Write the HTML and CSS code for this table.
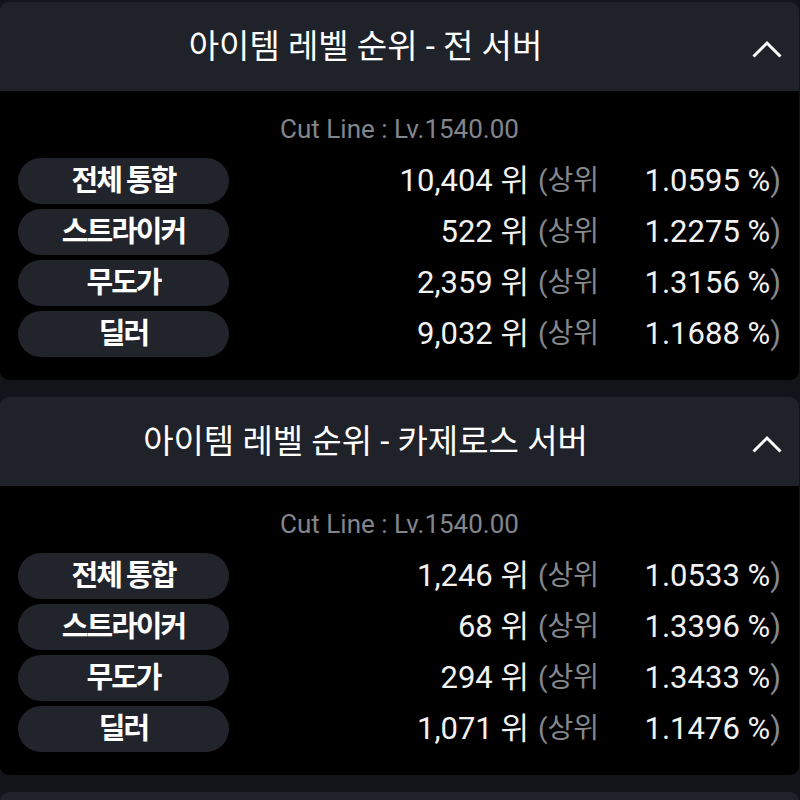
FILE: index.html
```html
<!DOCTYPE html>
<html lang="ko">
<head>
<meta charset="utf-8">
<link rel="stylesheet" href="styles.css">
</head>
<body>
<main class="page">
  <section class="card">
    <header class="card-head">
      <h2 class="title">아이템 레벨 순위 - 전 서버</h2>
      <svg class="chev" width="30" height="18" viewBox="0 0 30 18"><polyline points="1.5,16.5 15,3 28.5,16.5" fill="none" stroke="#fff" stroke-width="3"/></svg>
    </header>
    <div class="card-body">
      <div class="cut">Cut Line : Lv.1540.00</div>
      <div class="row"><span class="pill">전체 통합</span><span class="rank">10,404 위</span><span class="lbl">(상위</span><span class="pct">1.0595 %<span class="g">)</span></span></div>
      <div class="row"><span class="pill">스트라이커</span><span class="rank">522 위</span><span class="lbl">(상위</span><span class="pct">1.2275 %<span class="g">)</span></span></div>
      <div class="row"><span class="pill">무도가</span><span class="rank">2,359 위</span><span class="lbl">(상위</span><span class="pct">1.3156 %<span class="g">)</span></span></div>
      <div class="row"><span class="pill">딜러</span><span class="rank">9,032 위</span><span class="lbl">(상위</span><span class="pct">1.1688 %<span class="g">)</span></span></div>
    </div>
  </section>
  <section class="card">
    <header class="card-head">
      <h2 class="title">아이템 레벨 순위 - 카제로스 서버</h2>
      <svg class="chev" width="30" height="18" viewBox="0 0 30 18"><polyline points="1.5,16.5 15,3 28.5,16.5" fill="none" stroke="#fff" stroke-width="3"/></svg>
    </header>
    <div class="card-body">
      <div class="cut">Cut Line : Lv.1540.00</div>
      <div class="row"><span class="pill">전체 통합</span><span class="rank">1,246 위</span><span class="lbl">(상위</span><span class="pct">1.0533 %<span class="g">)</span></span></div>
      <div class="row"><span class="pill">스트라이커</span><span class="rank">68 위</span><span class="lbl">(상위</span><span class="pct">1.3396 %<span class="g">)</span></span></div>
      <div class="row"><span class="pill">무도가</span><span class="rank">294 위</span><span class="lbl">(상위</span><span class="pct">1.3433 %<span class="g">)</span></span></div>
      <div class="row"><span class="pill">딜러</span><span class="rank">1,071 위</span><span class="lbl">(상위</span><span class="pct">1.1476 %<span class="g">)</span></span></div>
    </div>
  </section>
  <section class="card">
    <header class="card-head">
      <h2 class="title">아이템 레벨 순위 - 루페온 서버</h2>
      <svg class="chev" width="30" height="18" viewBox="0 0 30 18"><polyline points="1.5,16.5 15,3 28.5,16.5" fill="none" stroke="#fff" stroke-width="3"/></svg>
    </header>
  </section>
</main>
</body>
</html>
```
FILE: styles.css
```css
html, body {
  margin: 0;
  padding: 0;
  background: #131419;
}
body {
  font-family: Roboto, "Noto Sans CJK KR", sans-serif;
  color: #f2f2f2;
  overflow: hidden;
  height: 800px;
}
.page {
  display: flex;
  flex-direction: column;
  gap: 17px;
  padding-top: 2px;
}
.card {
  display: flex;
  flex-direction: column;
  border-radius: 9px;
  overflow: hidden;
  width: 799px;
}
.card-head {
  height: 89px;
  background: #20222a;
  display: flex;
  align-items: center;
  position: relative;
}
.title {
  margin: 0;
  flex: 1;
  padding-right: 68px;
  text-align: center;
  font-weight: 400;
  font-size: 33px;
  line-height: 40px;
  color: #ffffff;
}
.chev {
  position: absolute;
  right: 17px;
  top: 38px;
}
.card-body {
  background: #000000;
  padding: 20px 0 23px;
  display: flex;
  flex-direction: column;
  gap: 5px;
}
.cut {
  text-align: center;
  color: #82868c;
  font-size: 26px;
  line-height: 36px;
  margin-bottom: 6px;
}
.row {
  display: grid;
  grid-template-columns: 211px 300px 72px 180px;
  grid-template-rows: 46px;
  align-items: center;
  padding-left: 18px;
  height: 46px;
  font-size: 31px;
  line-height: 40px;
  white-space: nowrap;
}
.pill {
  height: 46px;
  border-radius: 23px;
  background: #22242c;
  display: flex;
  align-items: center;
  justify-content: center;
  font-weight: 700;
  font-size: 29px;
  letter-spacing: -2px;
  color: #ffffff;
}
.rank {
  text-align: right;
}
.lbl {
  padding-left: 9px;
  color: #85878b;
  font-size: 28px;
}
.pct {
  text-align: right;
}
.g {
  color: #85878b;
}
```
